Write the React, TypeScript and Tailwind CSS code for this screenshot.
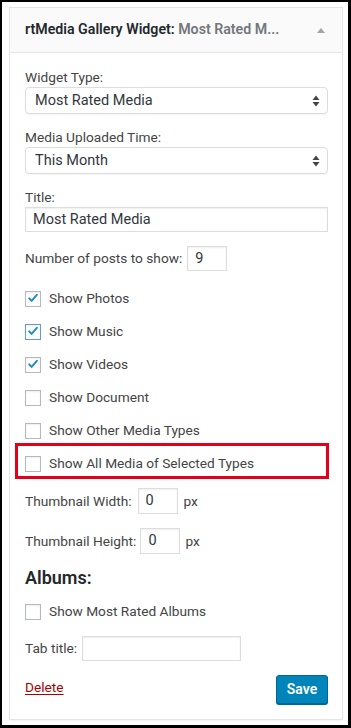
import React from 'react';

const font = { fontFamily: 'Roboto, "Liberation Sans", sans-serif' };

const Check = ({ checked, focus }: { checked?: boolean; focus?: boolean }) => (
  <span
    className={`flex h-[16px] w-[16px] shrink-0 items-center justify-center border bg-white ${
      focus ? 'border-[#5b9dd9] shadow-[0_0_2px_rgba(30,140,190,0.8)]' : 'border-[#b4b9be]'
    } shadow-[inset_0_1px_2px_rgba(0,0,0,0.07)]`}
  >
    {checked && (
      <svg viewBox="0 0 20 20" className="h-[18px] w-[18px] -mt-[1px]">
        <path d="M4.5 10.5l3.5 3.6 7.5-8.6" fill="none" stroke="#1e8cbe" strokeWidth={2.8} strokeLinecap="round" strokeLinejoin="round" />
      </svg>
    )}
  </span>
);

const CheckRow = ({ label, checked, focus }: { label: string; checked?: boolean; focus?: boolean }) => (
  <div className="flex h-[33px] items-center gap-[8px]">
    <Check checked={checked} focus={focus} />
    <span>{label}</span>
  </div>
);

const Select = ({ value }: { value: string }) => (
  <div className="flex h-[27px] items-center justify-between rounded-[4px] border border-[#dddddd] bg-white pl-[9px] pr-[7px] text-[14.5px] text-[#32373c] shadow-[0_1px_1px_rgba(0,0,0,0.04)]">
    <span>{value}</span>
    <svg viewBox="0 0 8 12" className="h-[12px] w-[8px]">
      <path d="M4 0.5L7.5 5H0.5z M4 11.5L7.5 7H0.5z" fill="#444" />
    </svg>
  </div>
);

const Box = ({ className, value }: { className: string; value?: string }) => (
  <div className={`flex items-center border border-[#dddddd] bg-white pl-[7px] text-[14.5px] text-[#32373c] shadow-[inset_0_1px_2px_rgba(0,0,0,0.07)] ${className}`}>
    {value}
  </div>
);

export default function App() {
  return (
    <div className="h-[728px] w-[351px] border-b-[3px] border-l-[2px] border-r-[3px] border-t-[2px] border-black bg-white pb-[5px] pl-[7px] pr-[5px] pt-[5px]" style={font}>
      <div className="flex h-full flex-col border border-[#e5e5e5] bg-white shadow-[0_1px_1px_rgba(0,0,0,0.04)]">
        {/* Header */}
        <div className="flex h-[45px] shrink-0 items-center justify-between border-b border-[#e5e5e5] bg-[#fafafa] pl-[15px] pr-[17px] text-[14.2px] font-semibold">
          <div className="whitespace-nowrap">
            <span className="text-[#23282d]">rtMedia Gallery Widget:</span>
            <span className="text-[#72777c]"> Most Rated M...</span>
          </div>
          <svg viewBox="0 0 8 5" className="h-[5px] w-[8px]">
            <path d="M4 0L8 5H0z" fill="#a0a5aa" />
          </svg>
        </div>

        {/* Body */}
        <div className="flex flex-1 flex-col pl-[15px] pr-[14px] pt-[15px] text-[13.7px] text-[#444]">
          <div className="h-[18px] leading-[18px]">Widget Type:</div>
          <div className="mt-[1px]">
            <Select value="Most Rated Media" />
          </div>

          <div className="mt-[14px] h-[18px] leading-[18px]">Media Uploaded Time:</div>
          <div className="mt-[1px]">
            <Select value="This Month" />
          </div>

          <div className="mt-[14px] h-[18px] leading-[18px]">Title:</div>
          <Box className="mt-[1px] h-[25px]" value="Most Rated Media" />

          <div className="mt-[14px] flex items-center gap-[5px]">
            <span>Number of posts to show:</span>
            <Box className="h-[25px] w-[40px]" value="9" />
          </div>

          <div className="mt-[11px] flex flex-col">
            <CheckRow label="Show Photos" checked />
            <CheckRow label="Show Music" checked focus />
            <CheckRow label="Show Videos" checked />
            <CheckRow label="Show Document" />
            <CheckRow label="Show Other Media Types" />
            <div className="relative">
              <CheckRow label="Show All Media of Selected Types" />
              <div className="absolute -left-[10px] right-[-1px] top-[-4px] h-[36px] border-[3px] border-[#e2001a]" />
            </div>
          </div>

          <div className="mt-[8px] flex items-center">
            <span>Thumbnail Width:</span>
            <Box className="ml-[6px] h-[26px] w-[40px]" value="0" />
            <span className="ml-[6px]">px</span>
          </div>

          <div className="mt-[14px] flex items-center">
            <span>Thumbnail Height:</span>
            <Box className="ml-[4px] h-[26px] w-[40px]" value="0" />
            <span className="ml-[5px]">px</span>
          </div>

          <h3 className="mt-[12px] text-[18px] font-semibold leading-[24px] text-[#23282d]">Albums:</h3>

          <div className="mt-[5px]">
            <CheckRow label="Show Most Rated Albums" />
          </div>

          <div className="mt-[8px] flex items-center gap-[5px]">
            <span>Tab title:</span>
            <Box className="h-[25px] w-[159px]" />
          </div>

          <div className="mt-[14px] flex items-start justify-between">
            <a href="#" className="mt-[2px] text-[#a00] underline underline-offset-2">
              Delete
            </a>
            <button className="h-[29px] w-[52px] rounded-[3px] border border-[#006799] bg-[#0085ba] text-[14px] font-semibold text-white shadow-[0_1px_0_#006799]">
              Save
            </button>
          </div>
        </div>
      </div>
    </div>
  );
}
